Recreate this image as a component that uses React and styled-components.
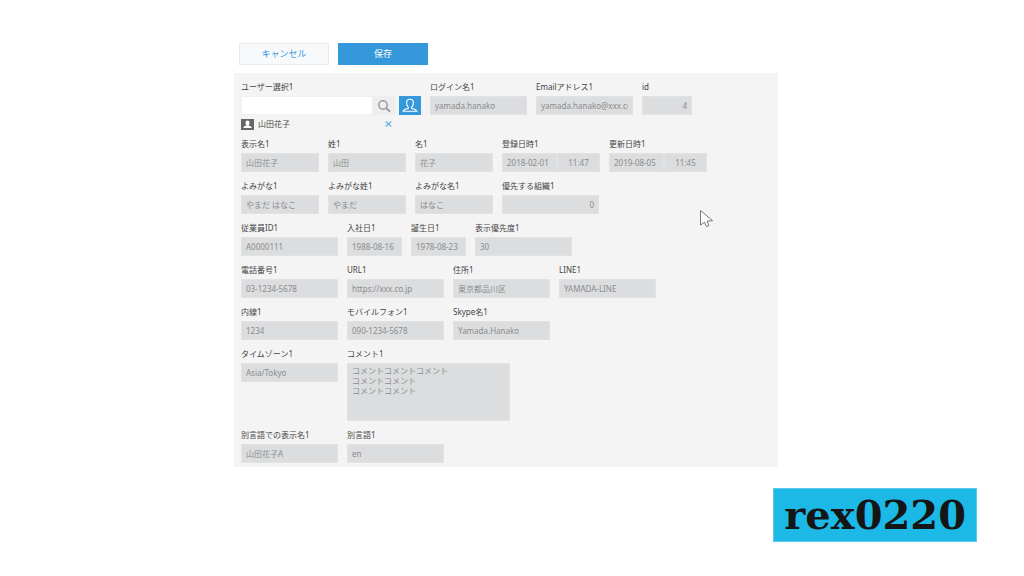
import React, { useState } from 'react'
import styled, { createGlobalStyle } from 'styled-components'

const GlobalStyle = createGlobalStyle`
* {
  box-sizing: border-box;
}

body {
  margin: 0;
  background: #fff;
  color: #444;
  font-family: "Noto Sans", "Noto Sans CJK JP", sans-serif;
  font-size: 8px;
  line-height: 12px;
}

input, textarea, button {
  font: inherit;
}
`;

const Page = styled.div`
  display: flex;
  flex-direction: column;
  padding: 43px 47px 24px 234px;
`;

const Record = styled.form`
  margin-right: 199px;
`;

const Toolbar = styled.div`
  display: flex;
  gap: 9px;
  padding: 0 5px 8px;
`;

const ToolButton = styled.button`
  width: 90px;
  height: 22px;
  padding: 0;
  border: 1px solid ${props => props.$primary ? '#3498db' : '#e6eaec'};
  background: ${props => props.$primary ? '#3498db' : '#f7f9fa'};
  color: ${props => props.$primary ? '#fff' : '#3498db'};
  font-size: 9px;
`;

const Panel = styled.div`
  position: relative;
  display: flex;
  flex-direction: column;
  gap: 8px;
  padding: 8px 7px 4px;
  background: #f4f4f4;
`;

const Row = styled.div`
  display: flex;
  align-items: flex-start;
  gap: 9px;
`;

const FieldBox = styled.div`
  display: flex;
  flex-direction: column;
  gap: 3px;
  width: ${props => props.$width}px;
`;

const Label = styled.label`
  height: 12px;
  color: #444;
  white-space: nowrap;
`;

const TextInput = styled.input`
  width: 100%;
  min-width: 0;
  height: 19px;
  padding: 0 4px;
  border: 1px solid #e0e2e3;
  background: #dbdddf;
  color: #8c8c8c;
  text-align: ${props => props.$align || 'left'};
  outline: none;
`;

const CommentArea = styled.textarea`
  display: block;
  width: 100%;
  height: 58px;
  padding: 2px 4px;
  border: 1px solid #e0e2e3;
  background: #dbdddf;
  color: #8c8c8c;
  line-height: 10px;
  resize: none;
  outline: none;
`;

const DateTime = styled.div`
  display: grid;
  grid-template-columns: 55fr 43fr;
`;

const PickerBar = styled.div`
  display: flex;
  height: 19px;
`;

const SearchInput = styled.input`
  flex: 1;
  min-width: 0;
  padding: 0 4px;
  border: 1px solid #f0f0f0;
  background: #fff;
  color: #333;
  outline: none;
`;

const IconButton = styled.button`
  display: flex;
  align-items: center;
  justify-content: center;
  width: 22px;
  padding: 0;
  border: 0;
  background: ${props => props.$primary ? '#3498db' : '#eee'};
  margin-left: ${props => props.$primary ? '4px' : '0'};
`;

const SelectedUser = styled.div`
  display: flex;
  align-items: center;
  gap: 4px;
  height: 12px;
  padding-right: 29px;
`;

const UserName = styled.span`
  flex: 1;
`;

const RemoveButton = styled.button`
  display: flex;
  padding: 0;
  border: 0;
  background: transparent;
`;

const Pointer = styled.svg`
  position: absolute;
  left: 465px;
  top: 136px;
`;

const Badge = styled.div`
  align-self: flex-end;
  margin-top: 21px;
  padding: 0 10px;
  border: 1px solid #5cc9ea;
  background: #1cb9e6;
  color: #151515;
  font-family: "DejaVu Serif", serif;
  font-size: 40px;
  font-weight: bold;
  line-height: 52px;
`;

const rows = [
  [
    { id: 'displayName', label: '表示名1', value: '山田花子', width: 78 },
    { id: 'lastName', label: '姓1', value: '山田', width: 78 },
    { id: 'firstName', label: '名1', value: '花子', width: 78 },
    { id: 'created', label: '登録日時1', value: '2018-02-01', time: '11:47', width: 98 },
    { id: 'updated', label: '更新日時1', value: '2019-08-05', time: '11:45', width: 98 },
  ],
  [
    { id: 'kana', label: 'よみがな1', value: 'やまだ はなこ', width: 78 },
    { id: 'lastKana', label: 'よみがな姓1', value: 'やまだ', width: 78 },
    { id: 'firstKana', label: 'よみがな名1', value: 'はなこ', width: 78 },
    { id: 'org', label: '優先する組織1', value: '0', width: 97, align: 'right' },
  ],
  [
    { id: 'employee', label: '従業員ID1', value: 'A0000111', width: 97 },
    { id: 'joined', label: '入社日1', value: '1988-08-16', width: 55 },
    { id: 'birthday', label: '誕生日1', value: '1978-08-23', width: 55 },
    { id: 'priority', label: '表示優先度1', value: '30', width: 97 },
  ],
  [
    { id: 'phone', label: '電話番号1', value: '03-1234-5678', width: 97 },
    { id: 'url', label: 'URL1', value: 'https://xxx.co.jp', width: 97 },
    { id: 'address', label: '住所1', value: '東京都品川区', width: 97 },
    { id: 'line', label: 'LINE1', value: 'YAMADA-LINE', width: 97 },
  ],
  [
    { id: 'extension', label: '内線1', value: '1234', width: 97 },
    { id: 'mobile', label: 'モバイルフォン1', value: '090-1234-5678', width: 97 },
    { id: 'skype', label: 'Skype名1', value: 'Yamada.Hanako', width: 97 },
  ],
  [
    { id: 'timezone', label: 'タイムゾーン1', value: 'Asia/Tokyo', width: 97 },
    {
      id: 'comment',
      label: 'コメント1',
      value: 'コメントコメントコメント\nコメントコメント\nコメントコメント',
      width: 163,
      multiline: true,
    },
  ],
  [
    { id: 'localName', label: '別言語での表示名1', value: '山田花子A', width: 97 },
    { id: 'locale', label: '別言語1', value: 'en', width: 97 },
  ],
]

function Field({ id, label, value, time, width, align, multiline }) {
  let control = <TextInput id={id} defaultValue={value} $align={align} readOnly />

  if (multiline) {
    control = <CommentArea id={id} defaultValue={value} readOnly />
  }
  if (time) {
    control = (
      <DateTime>
        <TextInput id={id} defaultValue={value} readOnly />
        <TextInput aria-label={label} defaultValue={time} $align="center" readOnly />
      </DateTime>
    )
  }

  return (
    <FieldBox $width={width}>
      <Label htmlFor={id}>{label}</Label>
      {control}
    </FieldBox>
  )
}

function UserPicker() {
  const [user, setUser] = useState('山田花子')

  return (
    <FieldBox $width={180}>
      <Label htmlFor="user">ユーザー選択1</Label>
      <PickerBar>
        <SearchInput id="user" />
        <IconButton type="button" aria-label="検索">
          <svg width="14" height="14" viewBox="0 0 14 14" fill="none" stroke="#999">
            <circle cx="6" cy="6" r="4.2" strokeWidth="1.5" />
            <path d="M9.2 9.2L13 12.4" strokeWidth="2" />
          </svg>
        </IconButton>
        <IconButton type="button" aria-label="ユーザー" $primary>
          <svg width="16" height="15" viewBox="0 0 16 15" fill="none" stroke="#fff" strokeWidth="1.1">
            <path d="M6.4 9.2C4.9 7.9 4.6 6.4 4.6 4.7C4.6 2.6 6 1.2 8 1.2S11.4 2.6 11.4 4.7C11.4 6.4 11.1 7.9 9.6 9.2V10.4C11.6 10.9 14.3 11.4 14.9 13.3H1.1C1.7 11.4 4.4 10.9 6.4 10.4Z" />
          </svg>
        </IconButton>
      </PickerBar>
      {user && (
        <SelectedUser>
          <svg width="13" height="11" viewBox="0 0 13 11">
            <rect width="13" height="11" fill="#666" />
            <path d="M5.4 6C4.7 5.4 4.5 4.6 4.5 3.7C4.5 2.4 5.3 1.6 6.5 1.6S8.5 2.4 8.5 3.7C8.5 4.6 8.3 5.4 7.6 6V6.6C9 7 10.5 7.4 10.8 9H2.2C2.5 7.4 4 7 5.4 6.6Z" fill="#fff" />
          </svg>
          <UserName>{user}</UserName>
          <RemoveButton type="button" aria-label="削除" onClick={() => setUser('')}>
            <svg width="7" height="6" viewBox="0 0 7 6" stroke="#5dade2" strokeWidth="1.1">
              <path d="M0.7 0.5L6.3 5.5M6.3 0.5L0.7 5.5" />
            </svg>
          </RemoveButton>
        </SelectedUser>
      )}
    </FieldBox>
  )
}

export default function App() {
  return (
    <Page>
      <GlobalStyle />
      <Record onSubmit={e => e.preventDefault()}>
        <Toolbar>
          <ToolButton type="button">キャンセル</ToolButton>
          <ToolButton type="submit" $primary>保存</ToolButton>
        </Toolbar>
        <Panel>
          <Row>
            <UserPicker />
            <Field id="login" label="ログイン名1" value="yamada.hanako" width={97} />
            <Field id="email" label="Emailアドレス1" value="yamada.hanako@xxx.co.jp" width={97} />
            <Field id="recordId" label="id" value="4" width={50} align="right" />
          </Row>
          {rows.map((fields, i) => (
            <Row key={i}>
              {fields.map(field => <Field key={field.id} {...field} />)}
            </Row>
          ))}
          <Pointer width="16" height="20" viewBox="0 0 16 20" fill="#fff" stroke="#777">
            <path d="M1.5 1.5V16.2L5.4 13L7.5 17.6L10 16.5L8 12.2L13.6 11.7Z" />
          </Pointer>
        </Panel>
      </Record>
      <Badge>rex0220</Badge>
    </Page>
  )
}
